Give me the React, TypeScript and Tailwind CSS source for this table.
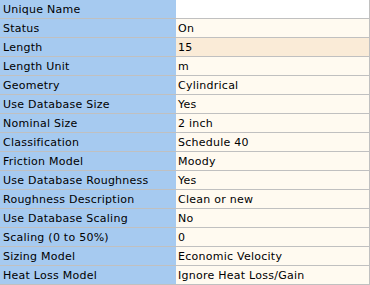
import React from "react";

type Prop = { label: string; value: string; tone?: "blank" | "active" };

const props: Prop[] = [
  { label: "Unique Name", value: "", tone: "blank" },
  { label: "Status", value: "On" },
  { label: "Length", value: "15", tone: "active" },
  { label: "Length Unit", value: "m" },
  { label: "Geometry", value: "Cylindrical" },
  { label: "Use Database Size", value: "Yes" },
  { label: "Nominal Size", value: "2 inch" },
  { label: "Classification", value: "Schedule 40" },
  { label: "Friction Model", value: "Moody" },
  { label: "Use Database Roughness", value: "Yes" },
  { label: "Roughness Description", value: "Clean or new" },
  { label: "Use Database Scaling", value: "No" },
  { label: "Scaling (0 to 50%)", value: "0" },
  { label: "Sizing Model", value: "Economic Velocity" },
  { label: "Heat Loss Model", value: "Ignore Heat Loss/Gain" },
];

export default function App() {
  return (
    <div className="w-[370px] h-[285px] bg-white font-['Verdana','DejaVu_Sans',sans-serif] text-[11px] tracking-[0.25px] text-black">
      {props.map((p) => (
        <div key={p.label} className="flex h-[19px] border-b border-[#c0c0c0]">
          <div className="w-[176px] shrink-0 bg-[#a6caf0] pl-[3px] pt-[1px] leading-[17px] whitespace-nowrap">
            {p.label}
          </div>
          <div
            className={`flex-1 pl-[2px] pt-[1px] leading-[17px] whitespace-nowrap border-r border-[#c0c0c0] ${
              p.tone === "blank"
                ? "bg-white"
                : p.tone === "active"
                  ? "bg-[#faebd7]"
                  : "bg-[#fffaf0]"
            }`}
          >
            {p.value}
          </div>
        </div>
      ))}
    </div>
  );
}
